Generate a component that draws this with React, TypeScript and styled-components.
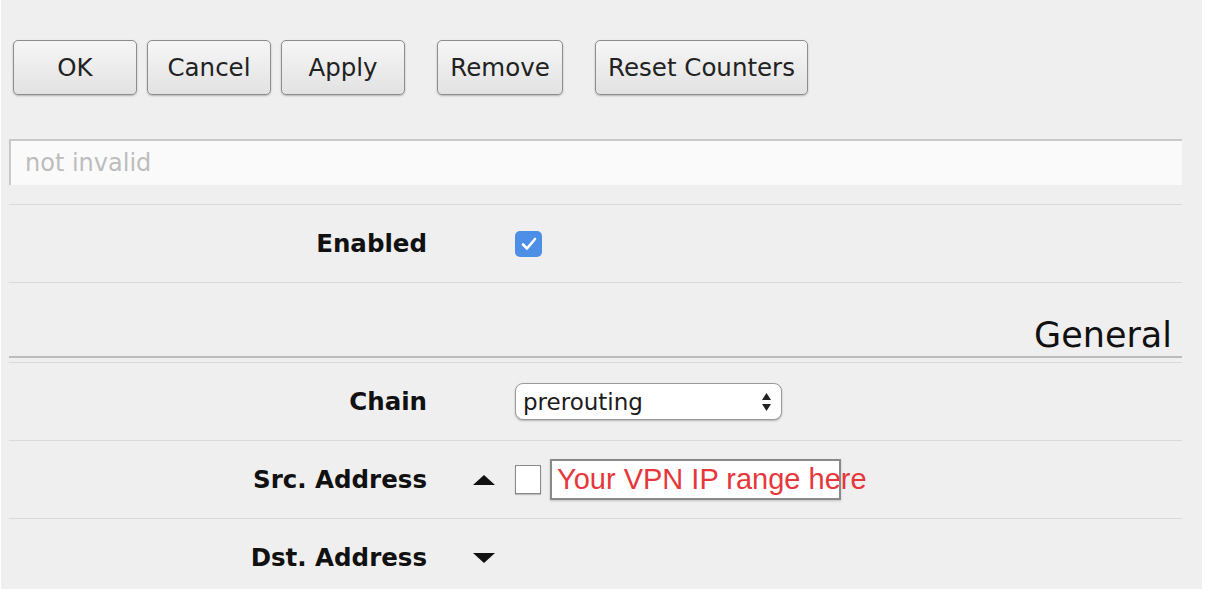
import React from "react";
import styled, { createGlobalStyle } from "styled-components";

const Global = createGlobalStyle`
  html, body {
    margin: 0;
    padding: 0;
    background: #ffffff;
  }
  body {
    font-family: "DejaVu Sans", Verdana, sans-serif;
    color: #1a1a1a;
  }
`;

const Panel = styled.div`
  margin-left: 1px;
  width: 1201px;
  height: 589px;
  box-sizing: border-box;
  background: #efefef;
  padding: 40px 20px 0 8px;
  display: flex;
  flex-direction: column;
  overflow: hidden;
`;

const Toolbar = styled.div`
  display: flex;
  align-items: center;
  padding-left: 4px;
  height: 55px;
  flex-shrink: 0;
`;

const Button = styled.button<{ $width: number; $gap?: number }>`
  width: ${({ $width }) => $width}px;
  height: 55px;
  margin-left: ${({ $gap }) => $gap ?? 0}px;
  box-sizing: border-box;
  border: 1px solid #8d8d8d;
  border-radius: 5px;
  background: linear-gradient(#f6f6f6, #e2e2e2);
  box-shadow: 0 1px 2px rgba(0, 0, 0, 0.25);
  font-family: "DejaVu Sans", Verdana, sans-serif;
  font-size: 24.5px;
  color: #222;
  padding: 0;
`;

const Filter = styled.div`
  margin-top: 44px;
  height: 46px;
  flex-shrink: 0;
  box-sizing: border-box;
  background: #fafafa;
  border-top: 2px solid #c9c9c9;
  border-left: 2px solid #c9c9c9;
  display: flex;
  align-items: center;
  padding-left: 14px;
  font-size: 24px;
  color: #bdbdbd;
`;

const Rows = styled.div`
  margin-top: 19px;
  display: flex;
  flex-direction: column;
  flex-shrink: 0;
`;

const Row = styled.div`
  height: 78px;
  flex-shrink: 0;
  box-sizing: border-box;
  border-top: 1px solid #dadada;
  display: grid;
  grid-template-columns: 418px 88px 1fr;
  align-items: center;
`;

const Label = styled.div`
  text-align: right;
  font-weight: 700;
  font-size: 24.5px;
  color: #111;
`;

const Toggle = styled.div<{ $up?: boolean }>`
  width: 0;
  height: 0;
  margin-left: 46px;
  border-left: 11px solid transparent;
  border-right: 11px solid transparent;
  ${({ $up }) =>
    $up ? "border-bottom: 10px solid #111;" : "border-top: 10px solid #111;"}
`;

const Value = styled.div`
  display: flex;
  align-items: center;
  gap: 9px;
`;

const Checked = styled.div`
  width: 27px;
  height: 26px;
  border-radius: 5px;
  background: #4d8fe6;
  display: flex;
  align-items: center;
  justify-content: center;
`;

const Unchecked = styled.div`
  width: 26px;
  height: 29px;
  box-sizing: border-box;
  background: #fff;
  border: 1.5px solid #8a8a8a;
  box-shadow: 0 1px 1px rgba(0, 0, 0, 0.2);
`;

const Section = styled.div`
  height: 76px;
  flex-shrink: 0;
  box-sizing: border-box;
  border-top: 1px solid #dadada;
  border-bottom: 2px solid #bcbcbc;
  display: flex;
  align-items: flex-end;
  justify-content: flex-end;
  padding: 0 10px 1px 0;
  margin-bottom: 4px;
`;

const SectionTitle = styled.div`
  font-size: 35px;
  line-height: 40px;
  color: #111;
`;

const Select = styled.div`
  width: 267px;
  height: 37px;
  box-sizing: border-box;
  background: #fff;
  border: 1px solid #9a9a9a;
  border-radius: 8px;
  box-shadow: 0 1px 2px rgba(0, 0, 0, 0.25);
  display: flex;
  align-items: center;
  justify-content: space-between;
  padding: 0 9px 0 7px;
  font-size: 23px;
  color: #1c1c1c;
`;

const Note = styled.div`
  width: 291px;
  height: 41px;
  box-sizing: border-box;
  background: #fff;
  border: 2px solid #8a8a8a;
  box-shadow: 0 1px 2px rgba(0, 0, 0, 0.2);
  display: flex;
  align-items: center;
  padding-left: 5px;
  white-space: nowrap;
  overflow: visible;
  font-family: "Liberation Sans", Arial, sans-serif;
  font-size: 29px;
  color: #e5373c;
`;

const Arrows = () => (
  <svg width="11" height="22" viewBox="0 0 11 22">
    <path d="M5.5 2 L10 9 L1 9 Z" fill="#222" />
    <path d="M5.5 20 L10 13 L1 13 Z" fill="#222" />
  </svg>
);

export default function App() {
  return (
    <>
      <Global />
      <Panel>
        <Toolbar>
          <Button $width={124}>OK</Button>
          <Button $width={124} $gap={10}>Cancel</Button>
          <Button $width={124} $gap={10}>Apply</Button>
          <Button $width={126} $gap={32}>Remove</Button>
          <Button $width={213} $gap={32}>Reset Counters</Button>
        </Toolbar>
        <Filter>not invalid</Filter>
        <Rows>
          <Row>
            <Label>Enabled</Label>
            <div />
            <Value>
              <Checked>
                <svg width="16" height="14" viewBox="0 0 16 14">
                  <path
                    d="M2 7.5 L6 11.5 L14 2"
                    fill="none"
                    stroke="#fff"
                    strokeWidth="2.6"
                    strokeLinecap="round"
                    strokeLinejoin="round"
                  />
                </svg>
              </Checked>
            </Value>
          </Row>
          <Section>
            <SectionTitle>General</SectionTitle>
          </Section>
          <Row>
            <Label>Chain</Label>
            <div />
            <Value>
              <Select>
                <span>prerouting</span>
                <Arrows />
              </Select>
            </Value>
          </Row>
          <Row>
            <Label>Src. Address</Label>
            <Toggle $up />
            <Value>
              <Unchecked />
              <Note>Your VPN IP range here</Note>
            </Value>
          </Row>
          <Row>
            <Label>Dst. Address</Label>
            <Toggle />
            <div />
          </Row>
        </Rows>
      </Panel>
    </>
  );
}
